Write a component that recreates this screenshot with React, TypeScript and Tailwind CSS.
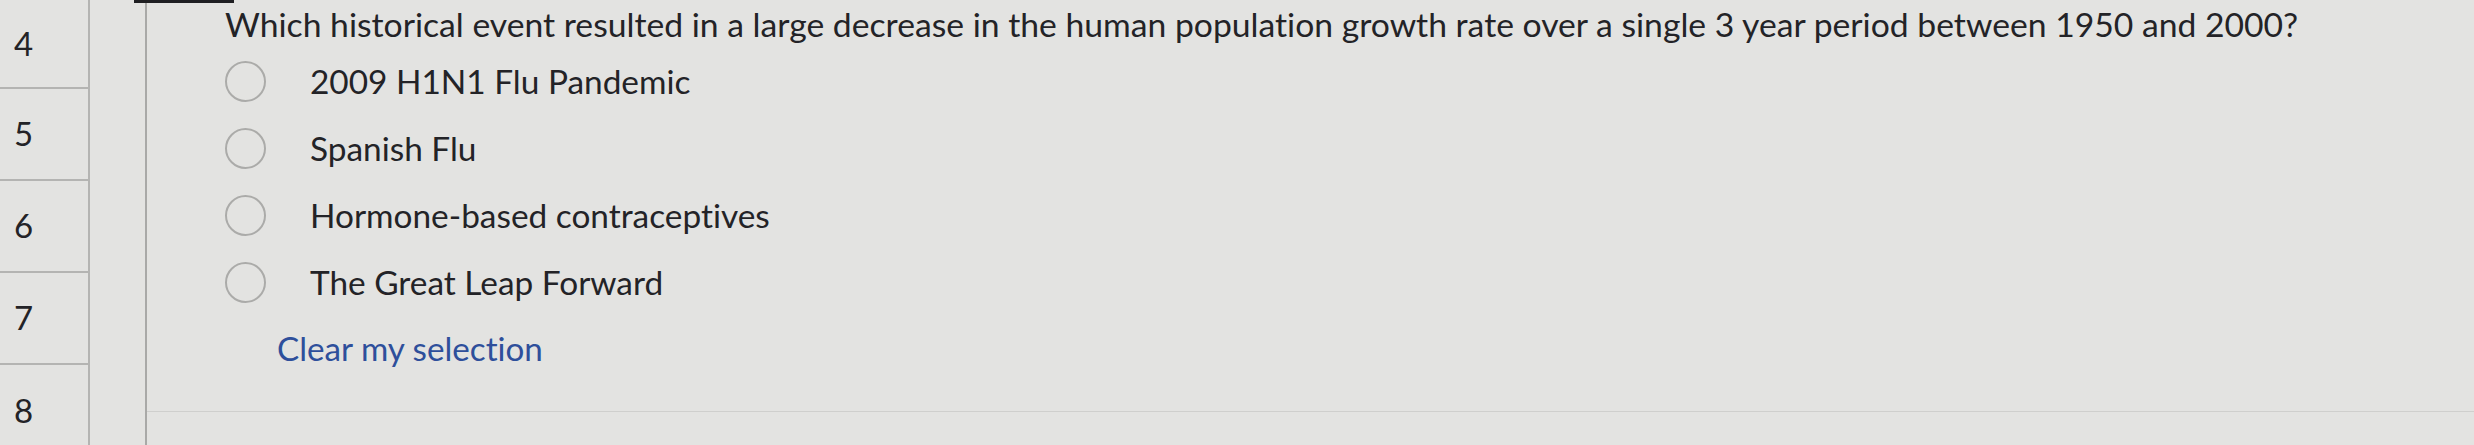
const NUMBERS = [4, 5, 6, 7, 8];

const OPTIONS = [
  "2009 H1N1 Flu Pandemic",
  "Spanish Flu",
  "Hormone-based contraceptives",
  "The Great Leap Forward",
];

export default function App() {
  return (
    <div
      className="flex h-[445px] w-[2474px] overflow-hidden bg-[#e3e3e1] text-[#232327] [font-variant-ligatures:none]"
      style={{ fontFamily: "Lato, 'Open Sans', sans-serif" }}
    >
      {/* Question number list */}
      <div className="flex w-[90px] shrink-0 flex-col border-r-2 border-[#b4b4b2]">
        {NUMBERS.map((n, i) => (
          <div
            key={n}
            className={`flex shrink-0 items-center pl-[14px] text-[33px] ${
              i === 0 ? "h-[89px]" : "h-[92px]"
            } ${i < NUMBERS.length - 1 ? "border-b-2 border-[#b4b4b2]" : ""}`}
          >
            {n}
          </div>
        ))}
      </div>

      {/* Spacer column with tab marker */}
      <div className="relative w-[57px] shrink-0 border-r-2 border-[#a9a9a7]">
        <div className="absolute left-[44px] top-0 h-[3px] w-[100px] bg-[#1f1f22]" />
      </div>

      {/* Question body */}
      <div className="flex flex-1 flex-col">
        <div className="h-[412px] border-b border-[#cfcfcd] pl-[78px] pt-[2px]">
          <p className="text-[33.7px] leading-[44px]">
            Which historical event resulted in a large decrease in the human
            population growth rate over a single 3 year period between 1950
            and 2000?
          </p>

          <div className="mt-[15px] flex flex-col gap-[26px]">
            {OPTIONS.map((opt) => (
              <label key={opt} className="flex h-[41px] items-center">
                <span className="h-[41px] w-[41px] shrink-0 rounded-full border-2 border-[#ababa9]" />
                <span className="ml-[44px] text-[33.4px]">{opt}</span>
              </label>
            ))}
          </div>

          <button className="ml-[52px] mt-[21px] text-[33.2px] text-[#2e4f9b]">
            Clear my selection
          </button>
        </div>
      </div>
    </div>
  );
}
